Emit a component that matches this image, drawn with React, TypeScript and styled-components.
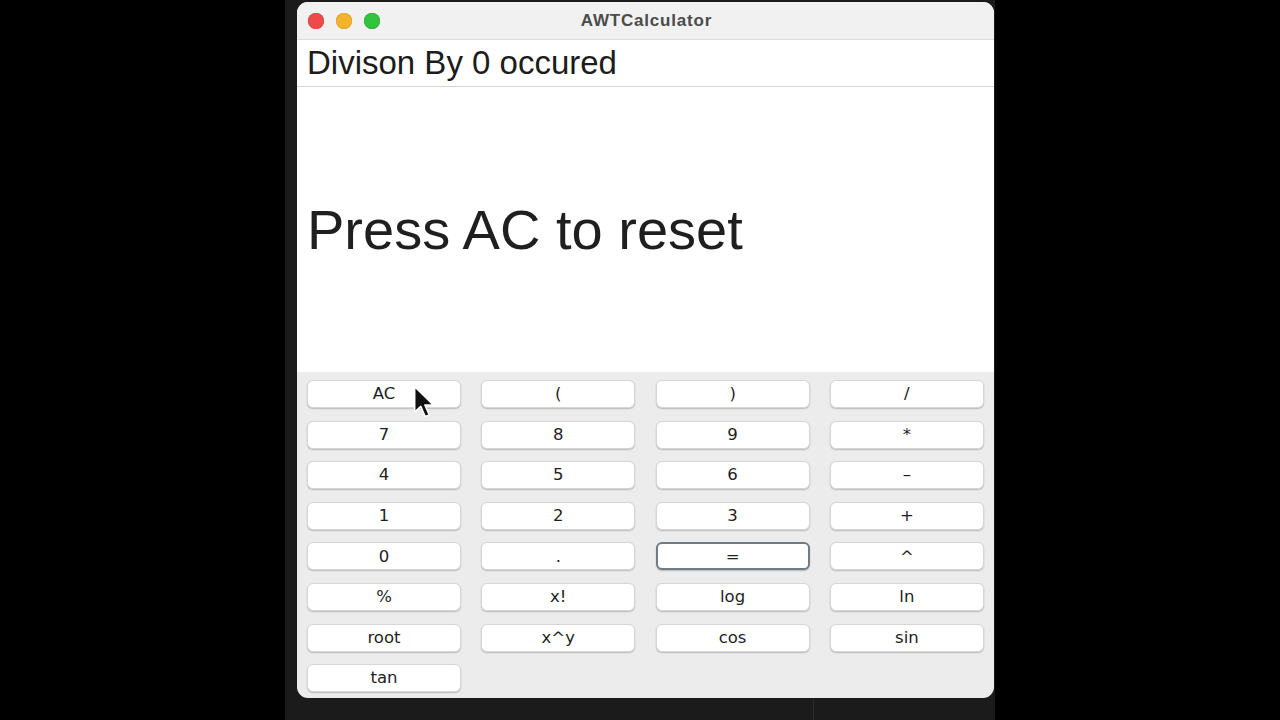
import styled, { createGlobalStyle } from 'styled-components';

const GlobalStyle = createGlobalStyle`
  html, body {
    margin: 0;
    padding: 0;
    background: #000;
  }
  * {
    box-sizing: border-box;
  }
`;

const Screen = styled.div`
  width: 1280px;
  height: 720px;
  background: #000;
  display: flex;
  overflow: hidden;
`;

const Desktop = styled.div`
  margin-left: 285px;
  width: 710px;
  height: 720px;
  background: #1b1b1c;
  padding: 2px 0 0 12px;
  position: relative;
`;

const Seam = styled.div`
  position: absolute;
  left: 528px;
  top: 698px;
  width: 1px;
  height: 22px;
  background: #2a2a2b;
`;

const Window = styled.div`
  width: 697px;
  height: 696px;
  border-radius: 11px;
  overflow: hidden;
  background: #ececec;
  display: flex;
  flex-direction: column;
  position: relative;
`;

const TitleBar = styled.div`
  height: 38px;
  background: #f1f1f1;
  border-bottom: 1px solid #dcdcdc;
  display: flex;
  align-items: center;
  position: relative;
  padding-left: 11px;
  gap: 12px;
`;

const Light = styled.span<{ $color: string; $edge: string }>`
  width: 16px;
  height: 16px;
  border-radius: 50%;
  background: ${(p) => p.$color};
  box-shadow: inset 0 0 0 0.5px ${(p) => p.$edge};
`;

const Title = styled.div`
  position: absolute;
  left: 0;
  right: 0;
  top: 0;
  bottom: 0;
  display: flex;
  align-items: center;
  justify-content: center;
  padding-left: 2px;
  font-family: 'Liberation Sans', Arial, sans-serif;
  font-weight: bold;
  font-size: 17px;
  letter-spacing: 0.8px;
  color: #4b4b4b;
  pointer-events: none;
`;

const StatusField = styled.div`
  height: 47px;
  background: #fff;
  border-bottom: 1px solid #d4d4d4;
  display: flex;
  align-items: center;
  padding: 0 10px 0;
  font-family: 'Liberation Sans', Arial, sans-serif;
  font-size: 33px;
  color: #1c1c1c;
`;

const Display = styled.div`
  height: 285px;
  background: #fff;
  display: flex;
  align-items: center;
  padding: 0 10px;
  font-family: 'Liberation Sans', Arial, sans-serif;
  font-size: 56px;
  color: #1f1f1f;
`;

const Keypad = styled.div`
  flex: 1;
  display: grid;
  grid-template-columns: repeat(4, 154px);
  grid-auto-rows: 28px;
  column-gap: 20.3px;
  row-gap: 12.6px;
  padding: 8px 10px 0;
  position: relative;
`;

const Key = styled.button<{ $focused?: boolean }>`
  appearance: none;
  margin: 0;
  padding: 1px 0 0;
  background: #fff;
  border: ${(p) => (p.$focused ? '2px solid #6f7c88' : '0.5px solid #d6d6d6')};
  border-radius: 6px;
  box-shadow: 0 1px 1.5px rgba(0, 0, 0, 0.22);
  font-family: 'DejaVu Sans', Verdana, sans-serif;
  font-size: 16.5px;
  color: #1e1e1e;
  display: flex;
  align-items: center;
  justify-content: center;
  line-height: 1;
`;

const Cursor = styled.svg`
  position: absolute;
  left: 116px;
  top: 13px;
  width: 22px;
  height: 34px;
`;

const keys = [
  'AC', '(', ')', '/',
  '7', '8', '9', '*',
  '4', '5', '6', '-',
  '1', '2', '3', '+',
  '0', '.', '=', '^',
  '%', 'x!', 'log', 'ln',
  'root', 'x^y', 'cos', 'sin',
  'tan',
];

export default function App() {
  return (
    <>
      <GlobalStyle />
      <Screen>
        <Desktop>
          <Window>
            <TitleBar>
              <Light $color="#ed4a48" $edge="#d03b39" />
              <Light $color="#f4b32c" $edge="#d99a1e" />
              <Light $color="#32c33f" $edge="#26a432" />
              <Title>AWTCalculator</Title>
            </TitleBar>
            <StatusField>Divison By 0 occured</StatusField>
            <Display>Press AC to reset</Display>
            <Keypad>
              {keys.map((k) => (
                <Key key={k} $focused={k === '='}>
                  {k === '-' ? '–' : k}
                </Key>
              ))}
              <Cursor viewBox="0 0 13 20">
                <path
                  d="M1 1 L1 16 L4.6 12.6 L7.2 18.6 L9.6 17.6 L7 11.8 L12 11.8 Z"
                  fill="#111"
                  stroke="#fff"
                  strokeWidth="0.9"
                  strokeLinejoin="round"
                />
              </Cursor>
            </Keypad>
          </Window>
          <Seam />
        </Desktop>
      </Screen>
    </>
  );
}
